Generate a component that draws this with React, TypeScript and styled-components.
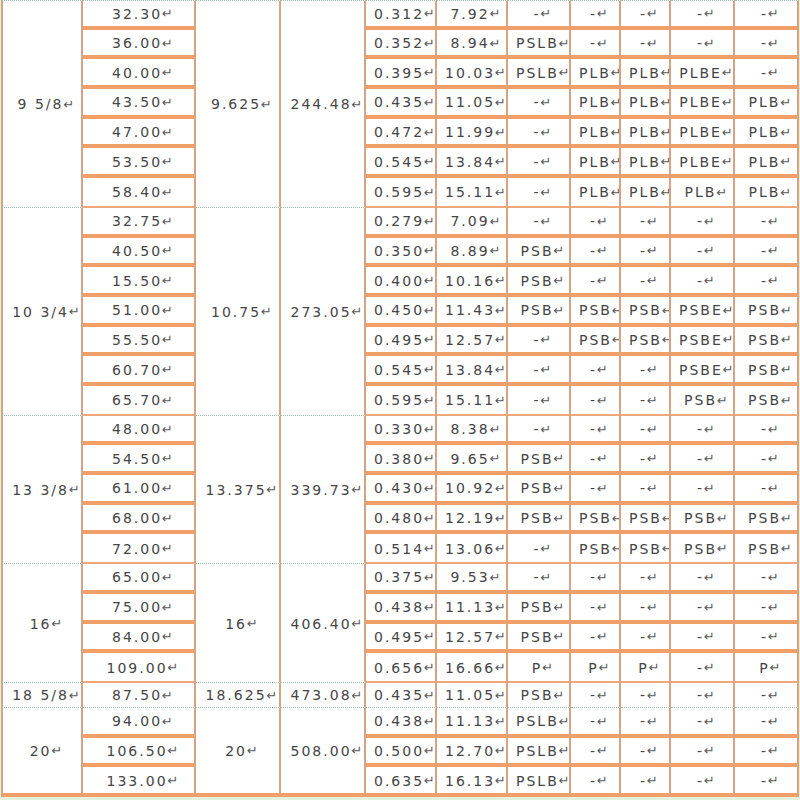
import React from 'react';
import styled, { createGlobalStyle } from 'styled-components';

const GlobalStyle = createGlobalStyle`
  html, body { margin: 0; padding: 0; background: #e3f1dc; }
  body { width: 800px; height: 800px; overflow: hidden; }
`;

type Edge = 'thick' | 'thin' | 'dotted';

const Table = styled.div`
  display: grid;
  grid-template-columns: 82px 113px 85px 85px 71px 71px 63px 50px 50px 64px 64px;
  grid-template-rows: repeat(23, 1fr) 25px repeat(3, 1fr);
  width: 798px;
  height: 797px;
  margin-left: 1px;
  background: #fff;
  font-family: "DejaVu Sans", Verdana, sans-serif;
  font-size: 14px;
  color: #454545;
`;

const edgeCss: Record<Edge, string> = {
  thick: '4px solid #f19f69',
  thin: '2px solid #f0a678',
  dotted: '1px dotted #9bbfae',
};

const Cell = styled.div<{ $row: number; $span: number; $col: number; $bottom: Edge; $top: boolean }>`
  grid-column: ${(p) => p.$col};
  grid-row: ${(p) => p.$row} / span ${(p) => p.$span};
  box-sizing: border-box;
  display: flex;
  align-items: center;
  justify-content: safe center;
  padding-left: 8px;
  padding-top: 1px;
  overflow: hidden;
  white-space: nowrap;
  letter-spacing: 2px;
  background: #fff;
  border-right: 2px solid #d6a385;
  border-left: ${(p) => (p.$col === 1 ? '2px solid #d6a385' : 'none')};
  border-top: ${(p) => (p.$top ? '1px dotted #9bbfae' : 'none')};
  border-bottom: ${(p) => edgeCss[p.$bottom]};
`;

const Mark = styled.span`
  font-size: 13px;
  letter-spacing: 0;
  color: #5a5a5a;
`;

type Group = {
  od: string;
  id: string;
  mm: string;
  rows: string[][];
  lastDotted?: boolean;
};

const D = '-';

const groups: Group[] = [
  {
    od: '9 5/8', id: '9.625', mm: '244.48',
    rows: [
      ['32.30', '0.312', '7.92', D, D, D, D, D],
      ['36.00', '0.352', '8.94', 'PSLB', D, D, D, D],
      ['40.00', '0.395', '10.03', 'PSLB', 'PLB', 'PLB', 'PLBE', D],
      ['43.50', '0.435', '11.05', D, 'PLB', 'PLB', 'PLBE', 'PLB'],
      ['47.00', '0.472', '11.99', D, 'PLB', 'PLB', 'PLBE', 'PLB'],
      ['53.50', '0.545', '13.84', D, 'PLB', 'PLB', 'PLBE', 'PLB'],
      ['58.40', '0.595', '15.11', D, 'PLB', 'PLB', 'PLB', 'PLB'],
    ],
  },
  {
    od: '10 3/4', id: '10.75', mm: '273.05',
    rows: [
      ['32.75', '0.279', '7.09', D, D, D, D, D],
      ['40.50', '0.350', '8.89', 'PSB', D, D, D, D],
      ['15.50', '0.400', '10.16', 'PSB', D, D, D, D],
      ['51.00', '0.450', '11.43', 'PSB', 'PSB', 'PSB', 'PSBE', 'PSB'],
      ['55.50', '0.495', '12.57', D, 'PSB', 'PSB', 'PSBE', 'PSB'],
      ['60.70', '0.545', '13.84', D, D, D, 'PSBE', 'PSB'],
      ['65.70', '0.595', '15.11', D, D, D, 'PSB', 'PSB'],
    ],
  },
  {
    od: '13 3/8', id: '13.375', mm: '339.73',
    rows: [
      ['48.00', '0.330', '8.38', D, D, D, D, D],
      ['54.50', '0.380', '9.65', 'PSB', D, D, D, D],
      ['61.00', '0.430', '10.92', 'PSB', D, D, D, D],
      ['68.00', '0.480', '12.19', 'PSB', 'PSB', 'PSB', 'PSB', 'PSB'],
      ['72.00', '0.514', '13.06', D, 'PSB', 'PSB', 'PSB', 'PSB'],
    ],
  },
  {
    od: '16', id: '16', mm: '406.40',
    rows: [
      ['65.00', '0.375', '9.53', D, D, D, D, D],
      ['75.00', '0.438', '11.13', 'PSB', D, D, D, D],
      ['84.00', '0.495', '12.57', 'PSB', D, D, D, D],
      ['109.00', '0.656', '16.66', 'P', 'P', 'P', D, 'P'],
    ],
  },
  {
    od: '18 5/8', id: '18.625', mm: '473.08',
    lastDotted: true,
    rows: [['87.50', '0.435', '11.05', 'PSB', D, D, D, D]],
  },
  {
    od: '20', id: '20', mm: '508.00',
    rows: [
      ['94.00', '0.438', '11.13', 'PSLB', D, D, D, D],
      ['106.50', '0.500', '12.70', 'PSLB', D, D, D, D],
      ['133.00', '0.635', '16.13', 'PSLB', D, D, D, D],
    ],
  },
];

const Text: React.FC<{ value: string }> = ({ value }) => (
  <>
    {value}
    <Mark>↵</Mark>
  </>
);

export default function App() {
  const cells: React.ReactNode[] = [];
  let row = 1;
  groups.forEach((g, gi) => {
    const isLastGroup = gi === groups.length - 1;
    const span = g.rows.length;
    const mergedBottom: Edge = isLastGroup ? 'thick' : 'dotted';
    const top = row === 1;
    const merged: [number, string][] = [
      [1, g.od],
      [3, g.id],
      [4, g.mm],
    ];
    merged.forEach(([col, v]) => {
      cells.push(
        <Cell key={`m${gi}-${col}`} $row={row} $span={span} $col={col} $bottom={mergedBottom} $top={top}>
          <Text value={v} />
        </Cell>
      );
    });
    g.rows.forEach((r, ri) => {
      const lastInGroup = ri === g.rows.length - 1;
      let bottom: Edge = 'thick';
      if (lastInGroup && !isLastGroup) bottom = g.lastDotted ? 'dotted' : 'thin';
      const cols = [2, 5, 6, 7, 8, 9, 10, 11];
      r.forEach((v, ci) => {
        cells.push(
          <Cell key={`c${row}-${ci}`} $row={row} $span={1} $col={cols[ci]} $bottom={bottom} $top={row === 1}>
            <Text value={v} />
          </Cell>
        );
      });
      row += 1;
    });
  });

  return (
    <>
      <GlobalStyle />
      <Table>{cells}</Table>
    </>
  );
}
